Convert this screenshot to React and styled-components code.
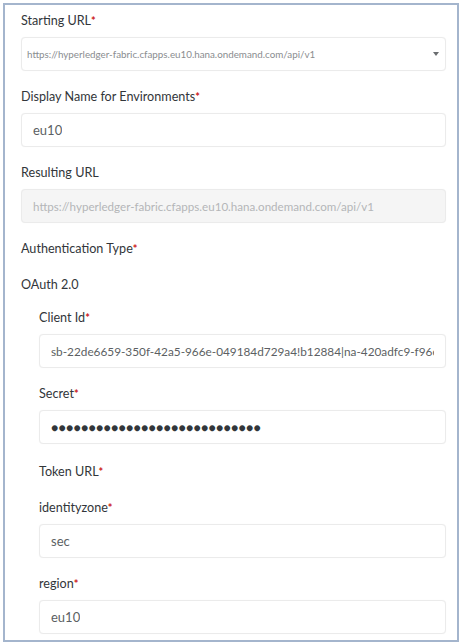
import React from 'react';
import styled, { createGlobalStyle } from 'styled-components';

const GlobalStyle = createGlobalStyle`
  html, body {
    margin: 0;
    padding: 0;
    background: #ffffff;
  }
  body {
    font-family: Lato, "Open Sans", Arial, sans-serif;
    color: #32363a;
  }
`;

const Frame = styled.div`
  box-sizing: border-box;
  width: 456px;
  height: 639px;
  margin: 3px 2px 2px 3px;
  border: 2px solid #a4b5cd;
  padding: 7px 11px 0 16px;
  overflow: hidden;
`;

const Field = styled.div`
  display: flex;
  flex-direction: column;
  padding-left: ${(p) => (p.$indent ? '18px' : '0')};
  margin-bottom: ${(p) => p.$gap || '17px'};
`;

const Label = styled.div`
  font-size: 12.6px;
  line-height: 17px;
  color: #32363a;
  margin-bottom: 8px;
`;

const Star = styled.span`
  color: #cc1919;
  font-size: 11px;
  font-weight: 700;
`;

const Box = styled.div`
  box-sizing: border-box;
  height: 34px;
  display: flex;
  align-items: center;
  justify-content: space-between;
  padding: 0 ${(p) => (p.$small ? '6px' : '11px')} 0 ${(p) => (p.$small ? '5px' : '11px')};
  border: 1px solid #ebebeb;
  border-radius: 4px;
  background: ${(p) => (p.$disabled ? '#f5f5f5' : '#ffffff')};
  box-shadow: 0 0 1px rgba(0, 0, 0, 0.06);
  overflow: hidden;
  white-space: nowrap;
`;

const Value = styled.span`
  font-size: ${(p) => p.$size || '13px'};
  color: ${(p) => p.$color || '#5c5f63'};
  overflow: hidden;
  white-space: nowrap;
`;

const Dots = styled.span`
  font-size: 12px;
  letter-spacing: 0.3px;
  color: #32363a;
`;

const Caret = styled.span`
  width: 0;
  height: 0;
  border-left: 3.5px solid transparent;
  border-right: 3.5px solid transparent;
  border-top: 4px solid #6a6d70;
  flex-shrink: 0;
`;

const Plain = styled.div`
  font-size: 12.6px;
  line-height: 17px;
  color: #32363a;
  margin-bottom: ${(p) => p.$gap || '19px'};
  padding-left: ${(p) => (p.$indent ? '18px' : '0')};
`;

const url = 'https://hyperledger-fabric.cfapps.eu10.hana.ondemand.com/api/v1';

function Req({ children }) {
  return (
    <>
      {children}
      <Star>*</Star>
    </>
  );
}

export default function App() {
  return (
    <>
      <GlobalStyle />
      <Frame>
        <Field>
          <Label><Req>Starting URL</Req></Label>
          <Box $small>
            <Value $size="9.8px" $color="#8a8d90">{url}</Value>
            <Caret />
          </Box>
        </Field>

        <Field>
          <Label><Req>Display Name for Environments</Req></Label>
          <Box>
            <Value>eu10</Value>
          </Box>
        </Field>

        <Field>
          <Label>Resulting URL</Label>
          <Box $disabled>
            <Value $size="11.6px" $color="#b4b6b8">{url}</Value>
          </Box>
        </Field>

        <Plain><Req>Authentication Type</Req></Plain>
        <Plain $gap="16px">OAuth 2.0</Plain>

        <Field $indent>
          <Label><Req>Client Id</Req></Label>
          <Box>
            <Value $size="11.8px">sb-22de6659-350f-42a5-966e-049184d729a4!b12884|na-420adfc9-f96e</Value>
          </Box>
        </Field>

        <Field $indent $gap="19px">
          <Label><Req>Secret</Req></Label>
          <Box>
            <Dots>●●●●●●●●●●●●●●●●●●●●●●●●●●●●</Dots>
          </Box>
        </Field>

        <Plain $indent><Req>Token URL</Req></Plain>

        <Field $indent>
          <Label><Req>identityzone</Req></Label>
          <Box>
            <Value>sec</Value>
          </Box>
        </Field>

        <Field $indent>
          <Label><Req>region</Req></Label>
          <Box>
            <Value>eu10</Value>
          </Box>
        </Field>
      </Frame>
    </>
  );
}
